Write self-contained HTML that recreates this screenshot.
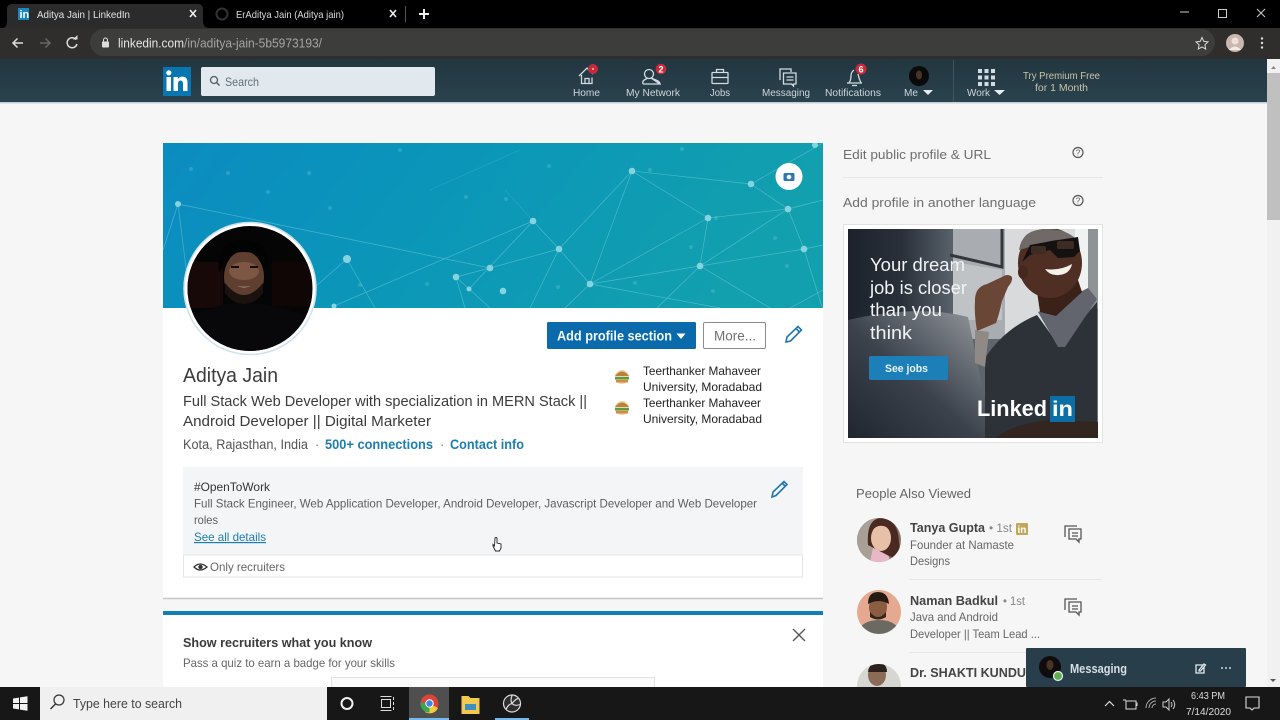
<!DOCTYPE html>
<html><head><meta charset="utf-8"><title>Aditya Jain | LinkedIn</title>
<style>
html,body{margin:0;padding:0;width:1280px;height:720px;overflow:hidden;background:#f6f6f6}
svg{display:block;font-family:"Liberation Sans",sans-serif}
.n{font-size:10.5px;fill:#cdd6db}
.g{fill:none;stroke:#d2dbe0;stroke-width:1.3}
.l{stroke:#7fd0da;stroke-width:.7;opacity:.55;fill:none}
.d{fill:#86d3e0}
.t{fill:#3b3b3b}
</style></head><body>
<svg width="1280" height="720" viewBox="0 0 1280 720" xmlns="http://www.w3.org/2000/svg">
<defs>
<linearGradient id="ban" x1="0" y1="0" x2="1" y2=".2"><stop offset="0" stop-color="#0b8cc1"/><stop offset=".5" stop-color="#0b97b8"/><stop offset="1" stop-color="#12a0ae"/></linearGradient>
<linearGradient id="ad" x1="0" y1="0" x2="1" y2="0"><stop offset="0" stop-color="#1c222b"/><stop offset=".22" stop-color="#2a313b"/><stop offset=".42" stop-color="#59616b"/><stop offset="1" stop-color="#6a7078"/></linearGradient>
<linearGradient id="low" x1="1" y1="0" x2="0" y2="1"><stop offset="0" stop-color="#9a9ea3"/><stop offset=".55" stop-color="#3b424c"/><stop offset="1" stop-color="#20262e"/></linearGradient>
<linearGradient id="nav" x1="0" y1="0" x2="0" y2="1"><stop offset="0" stop-color="#22363f"/><stop offset="1" stop-color="#2a434e"/></linearGradient>
<clipPath id="cb"><rect x="163" y="143" width="660" height="165"/></clipPath>
<clipPath id="ca"><rect x="848" y="229" width="250" height="209"/></clipPath>
<clipPath id="c1"><circle cx="879" cy="540" r="22"/></clipPath>
<clipPath id="c2"><circle cx="879" cy="612" r="22"/></clipPath>
<clipPath id="c3"><circle cx="879" cy="686" r="22"/></clipPath>
<clipPath id="c4"><circle cx="250" cy="288.500" r="62.500"/></clipPath>
</defs>

<!-- chrome -->
<rect width="1280" height="28" fill="#000"/>
<path d="M3 28q4-1 4-7V9q0-5 5-5h186q5 0 5 5v12q0 6 5 7z" fill="#2b2b2b"/>
<rect y="28" width="1280" height="31" fill="#2f2e2d"/>
<rect x="90" y="29" width="1125" height="27" rx="13.500" fill="#3d3d3c"/>
<rect x="18" y="8" width="11" height="12" fill="#1a86bd"/>
<text x="19.500" y="18" font-size="11" font-weight="bold" fill="#fff">in</text>
<text x="37" y="18" font-size="10.500" fill="#e3e3e3" textLength="93" lengthAdjust="spacingAndGlyphs">Aditya Jain | LinkedIn</text>
<path d="M190 10l6 7M196 10l-6 7M390 10l6 7M396 10l-6 7" stroke="#eee" stroke-width="1.600"/>
<circle cx="222" cy="14" r="5.500" fill="none" stroke="#333" stroke-width="2"/>
<text x="236" y="18" font-size="10.500" fill="#dcdcdc" textLength="108" lengthAdjust="spacingAndGlyphs">ErAditya Jain (Aditya jain)</text>
<rect x="405" y="6" width="1" height="16" fill="#555"/>
<path d="M424 9v10M419 14h10" stroke="#eee" stroke-width="2"/>
<path d="M1180 12h9" stroke="#ccc"/><rect x="1218.500" y="9.500" width="8" height="8" fill="none" stroke="#ccc"/><path d="M1257 9l8 8M1265 9l-8 8" stroke="#ccc"/>
<path d="M23 43H13M17.500 38.500L13 43l4.500 4.500" fill="none" stroke="#ddd" stroke-width="1.500"/>
<path d="M50 43H40M45.500 38.500L50 43l-4.500 4.500" fill="none" stroke="#666" stroke-width="1.500"/>
<path d="M76 39.500A5 5 0 1 0 77 44" fill="none" stroke="#ddd" stroke-width="1.500"/><path d="M73 39.500h4.500V35z" fill="#ddd"/>
<rect x="102" y="41.500" width="7" height="6" rx="1" fill="#ddd"/><path d="M103.500 42v-2a2 2 0 0 1 4 0v2" fill="none" stroke="#ddd"/>
<text x="118" y="47.500" font-size="12.500" fill="#e6e6e6" textLength="66" lengthAdjust="spacingAndGlyphs">linkedin.com</text>
<text x="184" y="47.500" font-size="12.500" fill="#a5a5a5" textLength="138" lengthAdjust="spacingAndGlyphs">/in/aditya-jain-5b5973193/</text>
<path d="M1202 37.500l1.800 3.900 4.200.5-3.100 2.900.8 4.200-3.700-2.100-3.700 2.100.8-4.200-3.100-2.900 4.200-.5z" fill="none" stroke="#ddd"/>
<circle cx="1235" cy="43" r="9" fill="#c9b7ad"/><circle cx="1235" cy="41" r="3.500" fill="#eee0d8"/><path d="M1229 50q6-7 12 0" fill="#f2ece8"/>
<circle cx="1262" cy="38.500" r="1.200" fill="#ddd"/><circle cx="1262" cy="43" r="1.200" fill="#ddd"/><circle cx="1262" cy="47.500" r="1.200" fill="#ddd"/>

<!-- linkedin nav -->
<rect y="59" width="1280" height="44" fill="url(#nav)"/>
<rect y="102" width="1267" height="1.500" fill="#c6ced3"/>
<rect x="163" y="67" width="28" height="29" fill="#0876b0"/>
<rect x="166.500" y="77" width="4.500" height="14" fill="#fff"/><circle cx="168.800" cy="72.800" r="2.600" fill="#fff"/>
<path d="M173.500 91V77h4.300v2q1.500-2.400 4.500-2.400 5.200 0 5.200 6V91h-4.500v-7.200q0-3.300-2.600-3.300-2.400 0-2.400 3.300V91z" fill="#fff"/>
<rect x="201" y="67" width="234" height="29" rx="2" fill="#e1e9ee"/>
<circle cx="214" cy="80" r="3.500" fill="none" stroke="#4f5b63" stroke-width="1.300"/><path d="M216.500 82.500l3 3" stroke="#4f5b63" stroke-width="1.400"/>
<text x="225" y="86" font-size="12" fill="#5f6f79" textLength="34" lengthAdjust="spacingAndGlyphs">Search</text>

<!-- nav icons -->
<path class="g" d="M579 76l8-8 6 6M581.500 75v8.500H592v-6M585 83.500v-5h4v5"/>
<circle cx="593" cy="69" r="5" fill="#c92a3a"/><rect x="592" y="68.500" width="2" height="1" fill="#fff"/>
<text class="n" x="573" y="96" textLength="27" lengthAdjust="spacingAndGlyphs">Home</text>
<circle class="g" cx="649" cy="74" r="4.500"/><path class="g" d="M643 84q-1-3 2-4.500l3-1.500M651 78l6 2.500q3 1.500 3 3.500zM643 84h17"/>
<circle cx="661" cy="69" r="5.300" fill="#c92a3a"/><text x="658.500" y="72.500" font-size="9" font-weight="bold" fill="#fff">2</text>
<text class="n" x="626" y="96" textLength="54" lengthAdjust="spacingAndGlyphs">My Network</text>
<rect class="g" x="712" y="72.500" width="16" height="11" rx=".5"/><path class="g" d="M716.500 72.500v-3h7v3M712 77.500h16"/>
<text class="n" x="710" y="96" textLength="20" lengthAdjust="spacingAndGlyphs">Jobs</text>
<path class="g" d="M780 80v-11h11v3M783.500 73H796v11h-2.500v2l-2-2h-8zM786.500 77h7M786.500 80h7"/>
<text class="n" x="762" y="96" textLength="48" lengthAdjust="spacingAndGlyphs">Messaging</text>
<path class="g" d="M847 83h15M849 83q2-3 2-7t3-6M858 74q1 5 3 9"/><path class="g" d="M852 85.500h5"/>
<circle cx="861" cy="69" r="5.500" fill="#c92a3a"/><text x="858.500" y="72.500" font-size="9" font-weight="bold" fill="#fff">6</text>
<text class="n" x="825" y="96" textLength="56" lengthAdjust="spacingAndGlyphs">Notifications</text>
<circle cx="919" cy="76" r="10" fill="#0b0a0a"/><ellipse cx="919" cy="75" rx="3" ry="4.500" fill="#4b3328"/>
<text class="n" x="904" y="96" textLength="14" lengthAdjust="spacingAndGlyphs">Me</text>
<path d="M923 90h10l-5 5z" fill="#e8edf0"/>
<rect x="953" y="60" width="1" height="42" fill="#3e5560"/>
<g fill="#d3dce1">
<rect x="978" y="69" width="4" height="4"/><rect x="984.500" y="69" width="4" height="4"/><rect x="991" y="69" width="4" height="4"/>
<rect x="978" y="75.500" width="4" height="4"/><rect x="984.500" y="75.500" width="4" height="4"/><rect x="991" y="75.500" width="4" height="4"/>
<rect x="978" y="82" width="4" height="4"/><rect x="984.500" y="82" width="4" height="4"/><rect x="991" y="82" width="4" height="4"/></g>
<text class="n" x="967" y="96" textLength="23" lengthAdjust="spacingAndGlyphs">Work</text>
<path d="M994 90h11l-5.500 5z" fill="#e8edf0"/>
<text x="1023" y="79" font-size="10.500" fill="#c9c3a8" textLength="77" lengthAdjust="spacingAndGlyphs">Try Premium Free</text>
<text x="1035" y="91" font-size="10.500" fill="#c9c3a8" textLength="53" lengthAdjust="spacingAndGlyphs">for 1 Month</text>

<!-- page -->
<rect x="0" y="103.500" width="1267" height="584" fill="#f6f6f6"/>
<rect x="1267" y="59" width="13" height="628" fill="#f1f1f1"/>
<rect x="1267" y="73" width="13" height="147" fill="#c0c0c0"/>
<path d="M1271 69l2.500-3 2.500 3z" fill="#888"/><path d="M1270 679h6l-3 3z" fill="#555"/>

<!-- main card -->
<rect x="163" y="143" width="660" height="455" fill="#fff"/>
<path d="M163 598.500h660" stroke="#c6c6c6" stroke-width="1.500"/>
<rect x="163" y="143" width="660" height="165" fill="url(#ban)"/>
<g clip-path="url(#cb)">
<path class="l" d="M178 204L490 268M178 204L163 250M178 204L190 300M533 221L559 249M533 221L469 289M533 221L334 306M559 249L490 268M490 268L456 277M559 249L590 284M559 249L632 171M590 284L632 171M632 171L751 184M632 171L708 218M708 218L788 209M708 218L700 266M788 209L751 184M788 209L700 266M788 209L823 200M751 184L823 143M700 266L590 284M700 266L804 249M700 266L657 308M700 266L770 308M590 284L708 218M590 284L720 308M590 284L565 308M559 249L530 308M456 277L465 308M456 277L490 308M347 259L375 308M347 259L300 300M804 249L823 310M788 209L804 249M804 249L823 245M823 290L790 308"/>
<path d="M520 150L430 190M533 221L505 190" stroke="#7fd0da" stroke-width=".6" opacity=".25"/>
<g class="d">
<circle cx="178" cy="204" r="3"/><circle cx="533" cy="221" r="3.300"/><circle cx="559" cy="249" r="3.300"/><circle cx="490" cy="268" r="3.300"/><circle cx="456" cy="277" r="3.300"/><circle cx="469" cy="289" r="2.500"/><circle cx="503" cy="291" r="3.300"/><circle cx="590" cy="284" r="3.300"/><circle cx="632" cy="171" r="3.300"/><circle cx="751" cy="184" r="3.300"/><circle cx="708" cy="218" r="3.300"/><circle cx="788" cy="209" r="3.300"/><circle cx="804" cy="249" r="3.300"/><circle cx="700" cy="266" r="3.300"/><circle cx="347" cy="259" r="4"/><circle cx="334" cy="306" r="2.500"/><circle cx="815" cy="145" r="3"/>
</g>
<g fill="#6cc3d8" opacity=".35"><circle cx="400" cy="150" r="2"/><circle cx="191" cy="169" r="2"/><circle cx="228" cy="173" r="2"/><circle cx="309" cy="173" r="2"/><circle cx="268" cy="192" r="2"/><circle cx="330" cy="208" r="2"/><circle cx="466" cy="197" r="2"/><circle cx="506" cy="199" r="2"/><circle cx="549" cy="166" r="2"/><circle cx="650" cy="170" r="2"/><circle cx="716" cy="218" r="2"/><circle cx="775" cy="238" r="2"/><circle cx="691" cy="247" r="2"/><circle cx="360" cy="285" r="2"/><circle cx="427" cy="284" r="2"/><circle cx="558" cy="287" r="2"/><circle cx="635" cy="283" r="2"/><circle cx="713" cy="291" r="2"/><circle cx="787" cy="266" r="2"/><circle cx="682" cy="149" r="2"/></g>
</g>
<circle cx="789" cy="176.500" r="13.500" fill="#fff"/>
<rect x="783.500" y="173" width="11" height="8" rx="1.500" fill="#2d78ad"/><circle cx="789" cy="177" r="2.300" fill="#fff"/>

<!-- avatar -->
<circle cx="250" cy="288.500" r="66" fill="#fff" stroke="#cfe3ea" stroke-width="1.500"/>
<circle cx="250" cy="288.500" r="62.500" fill="#060505"/>
<g clip-path="url(#c4)">
<rect x="187" y="262" width="36" height="46" fill="#170908"/>
<rect x="272" y="262" width="40" height="44" fill="#0f0605"/>
<path d="M187 360v-42q14-8 40-14h35q30 6 50 14v42z" fill="#08080a"/>
<ellipse cx="244" cy="277" rx="20" ry="26" fill="#5f3f30"/>
<ellipse cx="244" cy="271" rx="15" ry="9" fill="#7d5743"/>
<path d="M219 272q-3-32 25-32 26 0 24 30l-3-2q-1-10-8-14-13-4-26 0-7 4-9 14z" fill="#040303"/>
<path d="M225 283q19 24 38 0v10q-8 11-19 11t-19-11z" fill="#1a120e"/>
<path d="M237 286q7 3 14 0-7 1.500-14 0z" fill="#c4b0a3"/>
<path d="M231 267h8M250 267h8" stroke="#150e0c" stroke-width="2"/>
</g>

<!-- buttons -->
<rect x="547" y="322" width="149" height="27" rx="1.500" fill="#0a6aab"/>
<text x="557" y="340.500" font-size="13.500" font-weight="bold" fill="#f4f8fa" textLength="115" lengthAdjust="spacingAndGlyphs">Add profile section</text>
<path d="M676.500 333.500h9l-4.500 5.500z" fill="#fff"/>
<rect x="703.500" y="322.500" width="62" height="26" rx="1.500" fill="#fff" stroke="#8c8c8c"/>
<text x="714" y="340.500" font-size="13.500" fill="#707070" textLength="42" lengthAdjust="spacingAndGlyphs">More...</text>
<path d="M786 342l1-5 11-10.500 3.500 3.500-11 11zM796 328.500l3.500 3.500" fill="none" stroke="#1f75ac" stroke-width="1.600"/>

<!-- text -->
<text x="183" y="382" font-size="20" class="t" textLength="95" lengthAdjust="spacingAndGlyphs">Aditya Jain</text>
<text x="183" y="406" font-size="15" class="t" textLength="404" lengthAdjust="spacingAndGlyphs">Full Stack Web Developer with specialization in MERN Stack ||</text>
<text x="183" y="426" font-size="15" class="t" textLength="248" lengthAdjust="spacingAndGlyphs">Android Developer || Digital Marketer</text>
<text x="183" y="449" font-size="13.500" fill="#555" textLength="125" lengthAdjust="spacingAndGlyphs">Kota, Rajasthan, India</text>
<text x="315" y="449" font-size="13" fill="#777">·</text>
<text x="325" y="449" font-size="13.500" font-weight="bold" fill="#1c7fae" textLength="108" lengthAdjust="spacingAndGlyphs">500+ connections</text>
<text x="440" y="449" font-size="13" fill="#777">·</text>
<text x="450" y="449" font-size="13.500" font-weight="bold" fill="#1c7fae" textLength="74" lengthAdjust="spacingAndGlyphs">Contact info</text>

<g><circle cx="622" cy="377" r="7" fill="#e8d9a8"/><path d="M615 376q7-9 14 0z" fill="#b9813b"/><rect x="615" y="377" width="14" height="2.500" fill="#5e9a4a"/><rect x="616" y="380" width="12" height="2.500" fill="#d9893f"/></g>
<g><circle cx="622" cy="408" r="7" fill="#e8d9a8"/><path d="M615 407q7-9 14 0z" fill="#b9813b"/><rect x="615" y="408" width="14" height="2.500" fill="#5e9a4a"/><rect x="616" y="411" width="12" height="2.500" fill="#d9893f"/></g>
<g font-size="12" fill="#222">
<text x="643" y="375" textLength="118" lengthAdjust="spacingAndGlyphs">Teerthanker Mahaveer</text>
<text x="643" y="391" textLength="119" lengthAdjust="spacingAndGlyphs">University, Moradabad</text>
<text x="643" y="407" textLength="118" lengthAdjust="spacingAndGlyphs">Teerthanker Mahaveer</text>
<text x="643" y="423" textLength="119" lengthAdjust="spacingAndGlyphs">University, Moradabad</text>
</g>

<!-- open to work -->
<rect x="183" y="467" width="620" height="88" fill="#f3f5f6"/>
<rect x="183.500" y="555" width="619" height="22" fill="#fff" stroke="#e4e7e9"/>
<text x="194" y="491" font-size="12" fill="#333" textLength="76" lengthAdjust="spacingAndGlyphs">#OpenToWork</text>
<text x="194" y="507.500" font-size="12" fill="#5e5e5e" textLength="563" lengthAdjust="spacingAndGlyphs">Full Stack Engineer, Web Application Developer, Android Developer, Javascript Developer and Web Developer</text>
<text x="194" y="524" font-size="12" fill="#5e5e5e" textLength="24" lengthAdjust="spacingAndGlyphs">roles</text>
<text x="194" y="541" font-size="12" fill="#1c7fae" text-decoration="underline" textLength="72" lengthAdjust="spacingAndGlyphs">See all details</text>
<path d="M772 497l1-5 11-10.500 3 3-11 11zM782 483l3 3" fill="none" stroke="#1f75ac" stroke-width="1.600"/>
<path d="M194 567q6-6 13 0q-7 6-13 0z" fill="none" stroke="#333" stroke-width="1.300"/><circle cx="200.500" cy="567" r="2.200" fill="#333"/>
<text x="210" y="571" font-size="12" fill="#666" textLength="75" lengthAdjust="spacingAndGlyphs">Only recruiters</text>
<!-- cursor -->
<path d="M495 538.500a1 1 0 0 1 2 0v4.500l4 1v4l-1.500 3h-4l-2.500-5v-1.500l1.500 1.500z" fill="#fff" stroke="#222" stroke-width=".9"/>

<!-- second card -->
<rect x="163" y="611" width="660" height="76" fill="#fff"/>
<rect x="163" y="611" width="660" height="4" fill="#0f7fb4"/>
<text x="183" y="647" font-size="13" font-weight="bold" fill="#3a3a3a" textLength="189" lengthAdjust="spacingAndGlyphs">Show recruiters what you know</text>
<text x="183" y="667" font-size="12" fill="#666" textLength="212" lengthAdjust="spacingAndGlyphs">Pass a quiz to earn a badge for your skills</text>
<path d="M793 629l12 12M805 629l-12 12" stroke="#555" stroke-width="1.400"/>
<rect x="331.500" y="677.500" width="323" height="12" fill="#fbfbfb" stroke="#e2e2e2"/>

<!-- right rail -->
<text x="843" y="159" font-size="13" fill="#6e6e6e" textLength="148" lengthAdjust="spacingAndGlyphs">Edit public profile &amp; URL</text>
<circle cx="1078" cy="152.500" r="5" fill="none" stroke="#555" stroke-width="1.200"/><text x="1075.800" y="155.500" font-size="8" fill="#555">?</text>
<rect x="843" y="177" width="260" height="1" fill="#e7e7e7"/>
<text x="843" y="207" font-size="13" fill="#6e6e6e" textLength="193" lengthAdjust="spacingAndGlyphs">Add profile in another language</text>
<circle cx="1078" cy="200.500" r="5" fill="none" stroke="#555" stroke-width="1.200"/><text x="1075.800" y="203.500" font-size="8" fill="#555">?</text>

<!-- ad -->
<rect x="843.500" y="224.500" width="259" height="218" fill="#fff" stroke="#e2e2e2"/>
<rect x="848" y="229" width="250" height="209" fill="url(#ad)"/>
<g clip-path="url(#ca)">
<rect x="953" y="229" width="52" height="110" fill="#a9adb1"/>
<path d="M953 262l49 8v50H953z" fill="#c0c3c6"/>
<path d="M950 255l52 12V229" fill="none" stroke="#33383d" stroke-width="3"/>
<rect x="1005" y="229" width="70" height="140" fill="#d8dadb"/>
<rect x="1075" y="229" width="13" height="70" fill="#f0f1f1"/>
<rect x="1088" y="229" width="10" height="80" fill="#8e9396"/>
<path d="M848 320q70-16 120-3l25 121H848z" fill="url(#low)"/>
<path d="M985 438v-80q20-30 52-43l23 32 37-45v136z" fill="#2d3238"/>
<path d="M1038 312l20 35h7l32-48-9-11-40 20z" fill="#62656d"/>
<path d="M1036 285l4 27 16 4 26-24-4-12z" fill="#3a2219"/>
<ellipse cx="1050" cy="263" rx="32" ry="35" fill="#4f2f23"/>
<ellipse cx="1023" cy="272" rx="5" ry="7" fill="#46291e"/>
<path d="M1019 250q3-21 27-21 20 0 30 10-24 0-36 5-14 4-21 6z" fill="#6f6a68"/>
<path d="M1022 262l8-17 22-4 26-4 2 14-6 6-16 1-8-8-20 5z" fill="#141110"/>
<rect x="1031" y="246" width="15" height="8" rx="2" fill="#3d2c24"/><rect x="1057" y="241" width="17" height="8" rx="2" fill="#3d2c24"/>
<path d="M1045 269q15 2 27-5-2 10-13 11-9 1-14-6z" fill="#f4f0ea"/>
<path d="M975 300q0-13 12-16l15-7q6-4 10 0 1 4-4 10l-6 14q-3 14-6 22l-19 8q-3-18-2-31z" fill="#6a4636"/>
<path d="M975 330l14 2-4 35-10-4z" fill="#8f8a86"/>
<path d="M995 438q20-16 60-18l43 2v16z" fill="#33251f"/>
</g>
<g font-size="18" fill="#f1f3f4">
<text x="870" y="271" textLength="95" lengthAdjust="spacingAndGlyphs">Your dream</text>
<text x="870" y="294" textLength="97" lengthAdjust="spacingAndGlyphs">job is closer</text>
<text x="870" y="316" textLength="72" lengthAdjust="spacingAndGlyphs">than you</text>
<text x="870" y="339" textLength="42" lengthAdjust="spacingAndGlyphs">think</text>
</g>
<rect x="869" y="356" width="79" height="24" rx="2" fill="#1d7fb8"/>
<text x="885" y="372" font-size="11" font-weight="bold" fill="#e8f2f8" textLength="43" lengthAdjust="spacingAndGlyphs">See jobs</text>
<text x="977" y="416" font-size="22" font-weight="bold" fill="#fff" textLength="70" lengthAdjust="spacingAndGlyphs">Linked</text>
<rect x="1050" y="396" width="25" height="26" fill="#0c6ea6"/>
<text x="1052" y="416" font-size="21" font-weight="bold" fill="#fff" textLength="21" lengthAdjust="spacingAndGlyphs">in</text>

<!-- people -->
<text x="856" y="498" font-size="12.500" fill="#666" textLength="115" lengthAdjust="spacingAndGlyphs">People Also Viewed</text>
<circle cx="879" cy="540" r="22" fill="#857565"/>
<g clip-path="url(#c1)"><rect x="857" y="518" width="20" height="44" fill="#a8a096"/><path d="M870 562l3-14h14l3 14z" fill="#e7b9c6"/><path d="M868 545q-2-27 14-27 16 1 17 24l2 16h-8z" fill="#4a2a20"/><ellipse cx="881" cy="538" rx="10" ry="13" fill="#e7c0a8"/><path d="M872 530q8-8 18-1l-2-6h-13z" fill="#4a2a20"/></g>
<text x="910" y="532" font-size="13" font-weight="bold" fill="#444" textLength="75" lengthAdjust="spacingAndGlyphs">Tanya Gupta</text>
<text x="989" y="532" font-size="12" fill="#888" textLength="23" lengthAdjust="spacingAndGlyphs">• 1st</text>
<rect x="1016" y="523" width="12" height="12" rx="1" fill="#c0a75c"/><text x="1017.500" y="533" font-size="10" font-weight="bold" fill="#fff">in</text>
<text x="910" y="549" font-size="12" fill="#666" textLength="104" lengthAdjust="spacingAndGlyphs">Founder at Namaste</text>
<text x="910" y="565" font-size="12" fill="#666" textLength="40" lengthAdjust="spacingAndGlyphs">Designs</text>
<path d="M1065 537v-11h12M1069 529h12v10h-2v3l-3-3h-7zM1072 533h6M1072 536h6" fill="none" stroke="#555" stroke-width="1.300"/>
<rect x="909" y="579" width="193" height="1" fill="#e6e6e6"/>
<circle cx="879" cy="612" r="22" fill="#e5a890"/>
<g clip-path="url(#c2)"><path d="M857 634q4-14 22-14t22 14z" fill="#6a6a62"/><ellipse cx="878" cy="607" rx="9" ry="12" fill="#8a5c42"/><path d="M868 604q0-12 10-12t11 12q-10-6-21 0z" fill="#261a14"/><path d="M870 612q8 10 16 0v5q-8 5-16 0z" fill="#35251c"/></g>
<text x="910" y="605" font-size="13" font-weight="bold" fill="#444" textLength="88" lengthAdjust="spacingAndGlyphs">Naman Badkul</text>
<text x="1003" y="605" font-size="12" fill="#888" textLength="22" lengthAdjust="spacingAndGlyphs">• 1st</text>
<text x="910" y="621" font-size="12" fill="#666" textLength="88" lengthAdjust="spacingAndGlyphs">Java and Android</text>
<text x="910" y="638" font-size="12" fill="#666" textLength="130" lengthAdjust="spacingAndGlyphs">Developer || Team Lead ...</text>
<path d="M1065 610v-11h12M1069 602h12v10h-2v3l-3-3h-7zM1072 606h6M1072 609h6" fill="none" stroke="#555" stroke-width="1.300"/>
<rect x="909" y="652" width="193" height="1" fill="#e6e6e6"/>
<circle cx="879" cy="686" r="22" fill="#d6d6d2"/>
<g clip-path="url(#c3)"><ellipse cx="877" cy="675" rx="9" ry="11" fill="#8c6a58"/><path d="M868 672q1-9 10-9t9 9z" fill="#2b2220"/></g>
<text x="910" y="677" font-size="13" font-weight="bold" fill="#444" textLength="116" lengthAdjust="spacingAndGlyphs">Dr. SHAKTI KUNDU</text>

<!-- messaging -->
<rect x="1026" y="648" width="220" height="39" rx="1" fill="#283e4a"/>
<circle cx="1050" cy="667" r="11" fill="#0e0c0c"/><ellipse cx="1050" cy="665" rx="3.500" ry="5" fill="#4b3328"/>
<circle cx="1058" cy="676" r="4.500" fill="#5fb04c" stroke="#eef" stroke-width="1.200"/>
<text x="1070" y="673" font-size="12.500" font-weight="bold" fill="#d6dfe4" textLength="57" lengthAdjust="spacingAndGlyphs">Messaging</text>
<path d="M1203 665h-7v8h8v-6M1199 670l5-6 1.500 1-5 6h-1.500z" fill="none" stroke="#e4eaee" stroke-width="1.300"/>
<circle cx="1222" cy="668" r="1" fill="#cdd6db"/><circle cx="1226" cy="668" r="1" fill="#cdd6db"/><circle cx="1230" cy="668" r="1" fill="#cdd6db"/>

<!-- taskbar -->
<rect y="687" width="1280" height="33" fill="#171717"/>
<path d="M13 698.500l6-.9v5.400h-6zM20 697.400l7.500-1.100v6.700H20zM13 704h6v5.400l-6-.9zM20 704h7.500v6.700l-7.500-1.100z" fill="#f2f2f2"/>
<rect x="40" y="687" width="287" height="33" fill="#f0f0f0"/>
<circle cx="59" cy="700" r="5" fill="none" stroke="#333" stroke-width="1.200"/><path d="M55.500 704l-5 5" stroke="#333" stroke-width="1.400"/>
<text x="73" y="708" font-size="12.500" fill="#444" textLength="109" lengthAdjust="spacingAndGlyphs">Type here to search</text>
<circle cx="347" cy="703.500" r="5.500" fill="none" stroke="#f0f0f0" stroke-width="2"/>
<path d="M380.500 696.500h11M380.500 710.500h11" stroke="#ddd"/><rect x="381.500" y="699.500" width="9" height="8" fill="none" stroke="#ddd"/><path d="M393.500 697v3M393.500 702v3M393.500 707v3" stroke="#ddd"/>
<rect x="409" y="687" width="40" height="33" fill="#4f4f4f"/>
<rect x="409" y="718" width="40" height="2" fill="#76b9ed"/>
<circle cx="429.500" cy="703.500" r="9" fill="#d9453a"/>
<path d="M429.500 703.500L438 708a9 9 0 0 1-13 4z" fill="#f7c93c"/><path d="M429.500 703.500l-9-1a9 9 0 0 0 9 10z" fill="#3ba651"/>
<circle cx="429.500" cy="703.500" r="4.200" fill="#fff"/><circle cx="429.500" cy="703.500" r="3.200" fill="#3f85ec"/>
<path d="M461.500 696h7l2 2h9v16h-18z" fill="#f3c84f"/><rect x="465" y="704" width="11" height="6" fill="#3d8fc1"/>
<rect x="495" y="718" width="34" height="2" fill="#76b9ed"/>
<circle cx="512" cy="703.500" r="8.500" fill="#2d2d2d" stroke="#ddd" stroke-width="1.200"/>
<path d="M512 695.500q-2 5 0 8q3 3 8 1M512 703.500q-4 1-6 6M512 703.500q3-4 6-5" fill="none" stroke="#ddd" stroke-width="1.200"/>
<path d="M1105 706l4.500-4.500 4.500 4.500" fill="none" stroke="#ddd" stroke-width="1.200"/>
<rect x="1126" y="701" width="10" height="8" fill="none" stroke="#ddd"/><path d="M1123 700h3M1136 703h1v3" stroke="#ddd"/>
<path d="M1146 708a10 10 0 0 1 10-10M1149 708a7 7 0 0 1 7-7M1152 708a4 4 0 0 1 4-4" fill="none" stroke="#aaa"/>
<path d="M1163 702h3l3-3v11l-3-3h-3zM1171 702q2 2.500 0 5M1173 700q3.500 4.500 0 9" fill="none" stroke="#ccc"/>
<text x="1191" y="699" font-size="10" fill="#ddd" textLength="34" lengthAdjust="spacingAndGlyphs">6:43 PM</text>
<text x="1186" y="715" font-size="10" fill="#ddd" textLength="45" lengthAdjust="spacingAndGlyphs">7/14/2020</text>
<path d="M1246 697h13v11h-5l-2 2-2-2h-4z" fill="none" stroke="#ddd" stroke-width="1.100"/>
</svg>
</body></html>
